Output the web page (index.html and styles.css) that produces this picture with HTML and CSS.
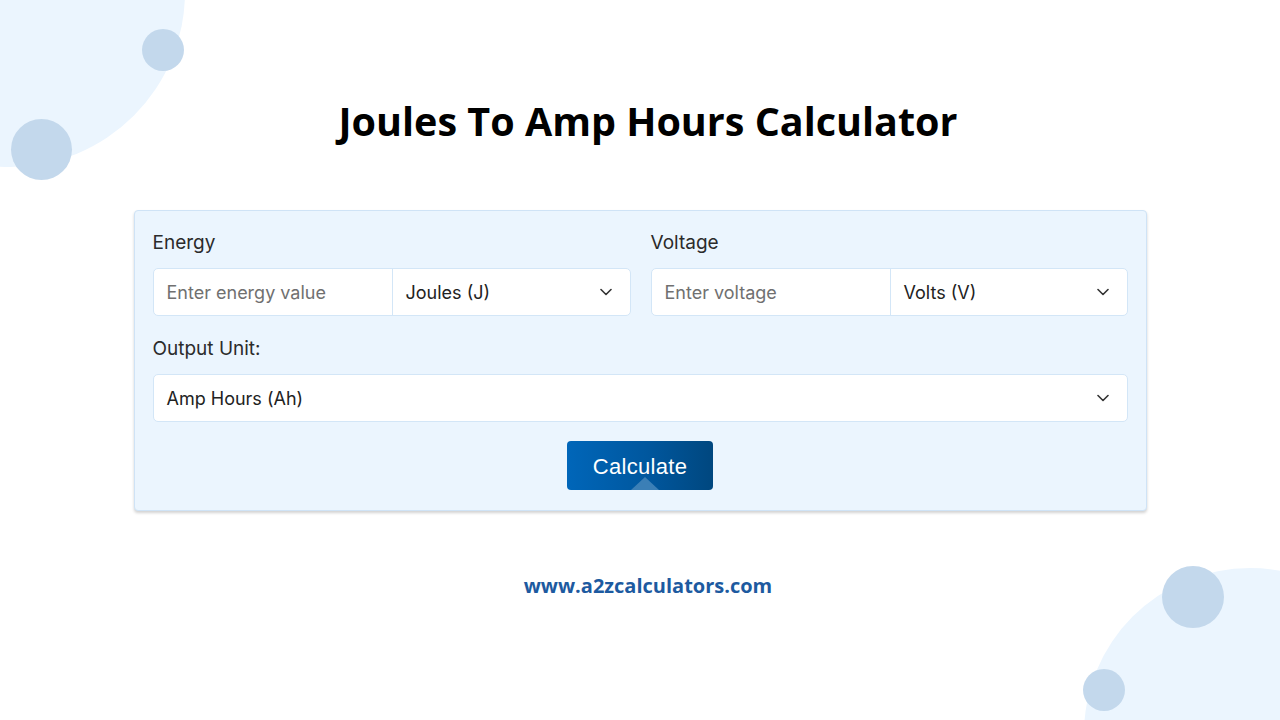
FILE: index.html
```html
<!DOCTYPE html>
<html lang="en">
<head>
<meta charset="utf-8">
<title>Joules To Amp Hours Calculator</title>
<link rel="stylesheet" href="styles.css">
</head>
<body>
<div class="page">
  <div class="blob blob-tl"></div>
  <div class="dot dot-tl-small"></div>
  <div class="dot dot-tl-big"></div>
  <div class="blob blob-br"></div>
  <div class="dot dot-br-big"></div>
  <div class="dot dot-br-small"></div>

  <main class="content">
    <h1 class="title">Joules To Amp Hours Calculator</h1>

    <section class="card">
      <div class="row">
        <div class="field">
          <div class="label">Energy</div>
          <div class="combo">
            <div class="combo-input placeholder">Enter energy value</div>
            <div class="combo-select">
              <span>Joules (J)</span>
              <svg class="chev" viewBox="0 0 12 8" width="12" height="8"><path d="M1 1.5 L6 6.5 L11 1.5" fill="none" stroke="#333" stroke-width="1.6" stroke-linecap="round" stroke-linejoin="round"/></svg>
            </div>
          </div>
        </div>
        <div class="field">
          <div class="label">Voltage</div>
          <div class="combo">
            <div class="combo-input placeholder">Enter voltage</div>
            <div class="combo-select">
              <span>Volts (V)</span>
              <svg class="chev" viewBox="0 0 12 8" width="12" height="8"><path d="M1 1.5 L6 6.5 L11 1.5" fill="none" stroke="#333" stroke-width="1.6" stroke-linecap="round" stroke-linejoin="round"/></svg>
            </div>
          </div>
        </div>
      </div>

      <div class="field field-full">
        <div class="label">Output Unit:</div>
        <div class="combo">
          <div class="combo-select">
            <span>Amp Hours (Ah)</span>
            <svg class="chev" viewBox="0 0 12 8" width="12" height="8"><path d="M1 1.5 L6 6.5 L11 1.5" fill="none" stroke="#333" stroke-width="1.6" stroke-linecap="round" stroke-linejoin="round"/></svg>
          </div>
        </div>
      </div>

      <div class="actions">
        <button class="btn" type="button">Calculate<span class="btn-tri"></span></button>
      </div>
    </section>

    <div class="footer">www.a2zcalculators.com</div>
  </main>
</div>
</body>
</html>
```

FILE: styles.css
```css
* { box-sizing: border-box; }
html, body { margin: 0; padding: 0; background: #ffffff; }
.page {
  position: relative;
  width: 1280px;
  height: 720px;
  overflow: hidden;
  background: #ffffff;
}
.blob, .dot {
  position: absolute;
  border-radius: 50%;
}
.blob { background: #ebf5fe; }
.dot { background: #c3d8ec; }
.blob-tl { left: -165px; top: -183px; width: 350px; height: 350px; }
.dot-tl-small { left: 142px; top: 29px; width: 42px; height: 42px; }
.dot-tl-big { left: 11px; top: 119px; width: 61px; height: 61px; }
.blob-br { left: 1084px; top: 568px; width: 332px; height: 332px; }
.dot-br-big { left: 1162px; top: 566px; width: 62px; height: 62px; }
.dot-br-small { left: 1083px; top: 669px; width: 42px; height: 42px; }

.content {
  position: relative;
  display: flex;
  flex-direction: column;
  align-items: center;
  padding-top: 94px;
}
.title {
  margin: 0;
  padding-left: 16px;
  font-family: "Open Sans", "Liberation Sans", sans-serif;
  font-weight: 700;
  font-size: 39.5px;
  line-height: 54px;
  color: #000000;
  letter-spacing: 0;
}
.card {
  margin-top: 62px;
  width: 1013px;
  background: #ebf5fe;
  border: 1px solid #cfe3f6;
  border-radius: 4px;
  box-shadow: 0 2px 3px rgba(0, 0, 0, 0.18);
  padding: 20px 18px 20px 18px;
  font-family: Inter, "Noto Sans", sans-serif;
}
.row {
  display: grid;
  grid-template-columns: 478px 477px;
  column-gap: 20px;
}
.field { display: flex; flex-direction: column; }
.field-full { margin-top: 21px; }
.label {
  font-size: 19px;
  line-height: 24px;
  color: #2b2b2b;
  margin-bottom: 13px;
}
.combo {
  display: flex;
  height: 48px;
  background: #ffffff;
  border: 1px solid #d3e6f7;
  border-radius: 5px;
}
.combo-input {
  flex: 0 0 239px;
  display: flex;
  align-items: center;
  padding-left: 13px;
  border-right: 1px solid #d3e6f7;
  font-size: 18px;
}
.placeholder { color: #707070; }
.combo-select {
  flex: 1;
  display: flex;
  align-items: center;
  justify-content: space-between;
  padding: 0 18px 0 13px;
  font-size: 18px;
  color: #222222;
}
.chev { display: block; }
.actions {
  display: flex;
  justify-content: center;
  margin-top: 19px;
}
.btn {
  position: relative;
  width: 146px;
  height: 49px;
  border: none;
  border-radius: 4px;
  background: linear-gradient(90deg, #0066b9 0%, #00579e 55%, #00477f 100%);
  color: #ffffff;
  font-family: "Liberation Sans", Arial, sans-serif;
  font-size: 22px;
  letter-spacing: 0.3px;
  padding: 2px 0 0 0;
  overflow: hidden;
}
.btn-tri {
  position: absolute;
  left: 64px;
  bottom: 0;
  width: 0;
  height: 0;
  border-left: 14px solid transparent;
  border-right: 14px solid transparent;
  border-bottom: 13px solid #3b7fb6;
}
.footer {
  margin-top: 61px;
  padding-left: 16px;
  font-family: "Open Sans", "Liberation Sans", sans-serif;
  font-weight: 700;
  font-size: 20px;
  line-height: 28px;
  color: #1d5aa0;
}
```
